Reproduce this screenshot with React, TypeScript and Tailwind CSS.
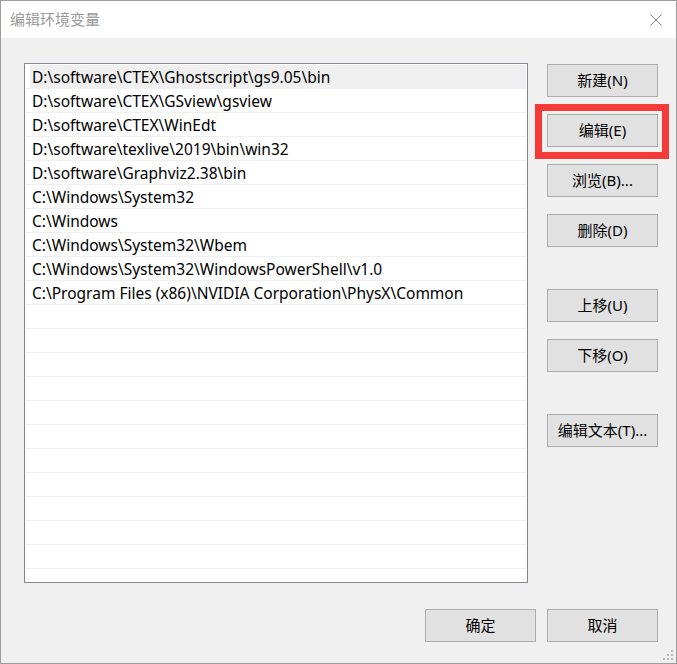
import React from "react";

const paths = [
  "D:\\software\\CTEX\\Ghostscript\\gs9.05\\bin",
  "D:\\software\\CTEX\\GSview\\gsview",
  "D:\\software\\CTEX\\WinEdt",
  "D:\\software\\texlive\\2019\\bin\\win32",
  "D:\\software\\Graphviz2.38\\bin",
  "C:\\Windows\\System32",
  "C:\\Windows",
  "C:\\Windows\\System32\\Wbem",
  "C:\\Windows\\System32\\WindowsPowerShell\\v1.0",
  "C:\\Program Files (x86)\\NVIDIA Corporation\\PhysX\\Common",
];

const FONT = { fontFamily: '"Noto Sans", "Noto Sans CJK SC", sans-serif' };

function Btn({ label }: { label: string }) {
  return (
    <div className="w-[111px] h-[33px] bg-[#e1e1e1] border border-[#adadad] flex items-center justify-center text-[15px] text-black leading-none">
      {label}
    </div>
  );
}

export default function App() {
  const rows: (string | null)[] = [...paths];
  while (rows.length < 22) rows.push(null);
  return (
    <div
      className="relative w-[677px] h-[664px] border border-[#9c9c9c] bg-[#f0f0f0] flex flex-col overflow-hidden"
      style={FONT}
    >
      {/* title bar */}
      <div className="h-[37px] bg-white flex items-center justify-between pl-[9px] pr-[14px] shrink-0">
        <span className="text-[15px] text-[#9a9a9a] leading-none">编辑环境变量</span>
        <svg width="12" height="12" viewBox="0 0 12 12" className="block">
          <path d="M0.5 0.5 L11.5 11.5 M11.5 0.5 L0.5 11.5" stroke="#808080" strokeWidth="1" />
        </svg>
      </div>

      {/* body */}
      <div className="flex-1 flex flex-col pl-[23px] pt-[25px] pr-[18px]">
        <div className="flex">
          <div className="w-[504px] h-[520px] border border-[#828790] bg-white p-[1px] overflow-hidden shrink-0">
            {rows.map((r, i) => (
              <div key={i} className="h-[24px] border-b border-[#f0f0f0] flex">
                <div
                  className={
                    "flex-1 flex items-center pl-[2px] pt-[2px] ml-[4px] text-[15.5px] text-black whitespace-nowrap leading-none " +
                    (i === 0 ? "bg-[#efefef]" : "")
                  }
                >
                  {r}
                </div>
              </div>
            ))}
          </div>
          <div className="ml-[19px] pt-[1px] flex flex-col">
            <Btn label="新建(N)" />
            <div className="mt-[17px]">
              <Btn label="编辑(E)" />
            </div>
            <div className="mt-[17px]">
              <Btn label="浏览(B)..." />
            </div>
            <div className="mt-[17px]">
              <Btn label="删除(D)" />
            </div>
            <div className="mt-[42px]">
              <Btn label="上移(U)" />
            </div>
            <div className="mt-[17px]">
              <Btn label="下移(O)" />
            </div>
            <div className="mt-[42px]">
              <Btn label="编辑文本(T)..." />
            </div>
          </div>
        </div>
        <div className="flex justify-end gap-[11px] mt-[26px]">
          <Btn label="确定" />
          <Btn label="取消" />
        </div>
      </div>

      {/* red annotation box */}
      <div className="absolute left-[534px] top-[103px] w-[134px] h-[55px] border-[7px] border-[#f53a3a] pointer-events-none" />

      {/* resize grip */}
      <svg width="14" height="14" viewBox="0 0 14 14" className="absolute right-[1px] bottom-[1px]">
        <rect x="10" y="2" width="2" height="2" fill="#b8b8b8" />
        <rect x="6" y="6" width="2" height="2" fill="#b8b8b8" />
        <rect x="10" y="6" width="2" height="2" fill="#b8b8b8" />
        <rect x="2" y="10" width="2" height="2" fill="#b8b8b8" />
        <rect x="6" y="10" width="2" height="2" fill="#b8b8b8" />
        <rect x="10" y="10" width="2" height="2" fill="#b8b8b8" />
      </svg>
    </div>
  );
}
